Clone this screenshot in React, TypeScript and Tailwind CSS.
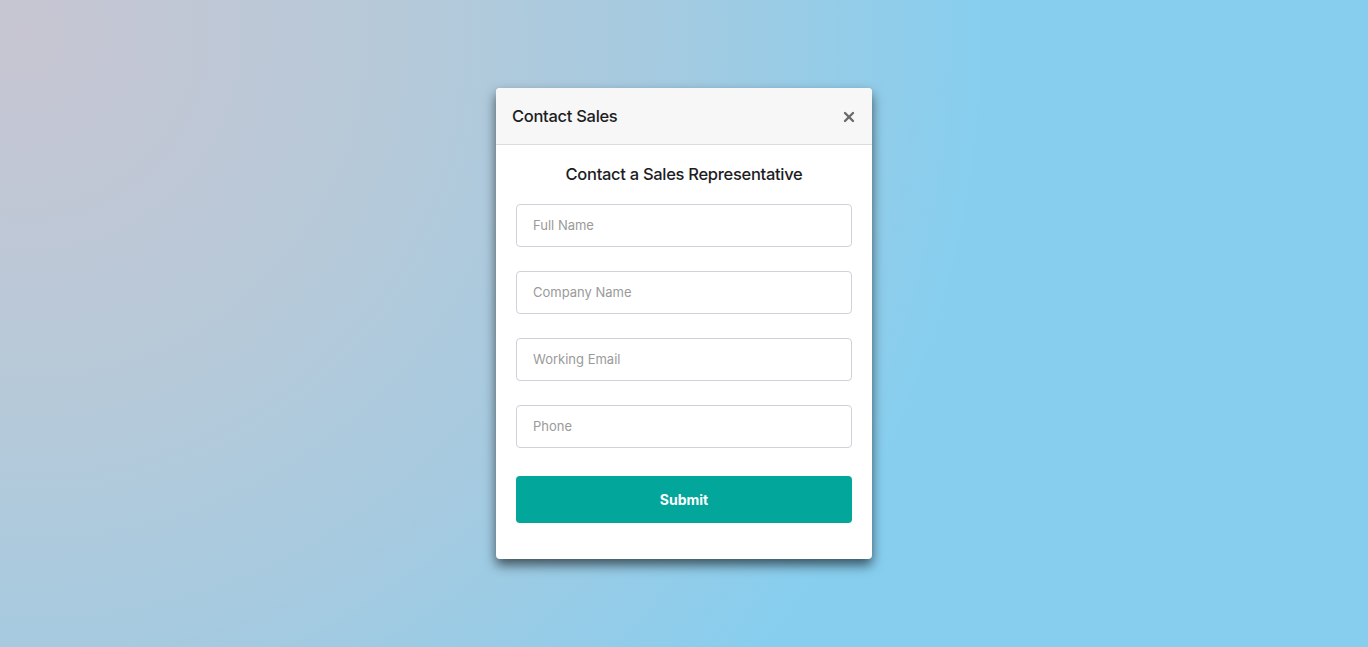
import { X } from 'lucide-react';

const fields = ['Full Name', 'Company Name', 'Working Email', 'Phone'];

const App = () => {
  return (
    <div
      className="min-h-screen w-full flex justify-center items-start pt-[88px] bg-[radial-gradient(circle_at_25px_35px,#c7c5d2_0px,#b8c9d8_330px,#a6cae0_620px,#87ceee_960px)]"
      style={{ fontFamily: 'Inter, "Noto Sans", sans-serif' }}
    >
      <div className="w-[376px] bg-white rounded-[4px] overflow-hidden shadow-[0_6px_12px_rgba(0,0,0,0.6)]">
        <div className="h-[57px] flex items-center justify-between pl-4 pr-4 pt-[1px] bg-[#f7f7f7] border-b border-[#dcdcdc]">
          <h2 className="text-[16.5px] font-medium text-[#1d1d1f] tracking-[-0.3px]">Contact Sales</h2>
          <button className="text-[#6b6b6b] -mr-[1px]">
            <X size={16} strokeWidth={3.6} />
          </button>
        </div>
        <div className="px-5 pt-[17px] pb-9">
          <h3 className="text-center text-[16.5px] font-medium text-[#1d1d1f] tracking-[-0.3px] mb-[17px]">
            Contact a Sales Representative
          </h3>
          <form className="flex flex-col gap-6" onSubmit={(e) => e.preventDefault()}>
            {fields.map((f) => (
              <input
                key={f}
                placeholder={f}
                className="h-[43px] w-full border border-[#cfd2d8] rounded-[4px] px-4 text-[13px] text-[#333] placeholder:text-[#9a9a9a] outline-none"
              />
            ))}
            <button
              type="submit"
              className="mt-1 h-[47px] w-full rounded-[4px] bg-[#03a69a] text-white text-[14px] font-bold"
            >
              Submit
            </button>
          </form>
        </div>
      </div>
    </div>
  );
};

export default App;
